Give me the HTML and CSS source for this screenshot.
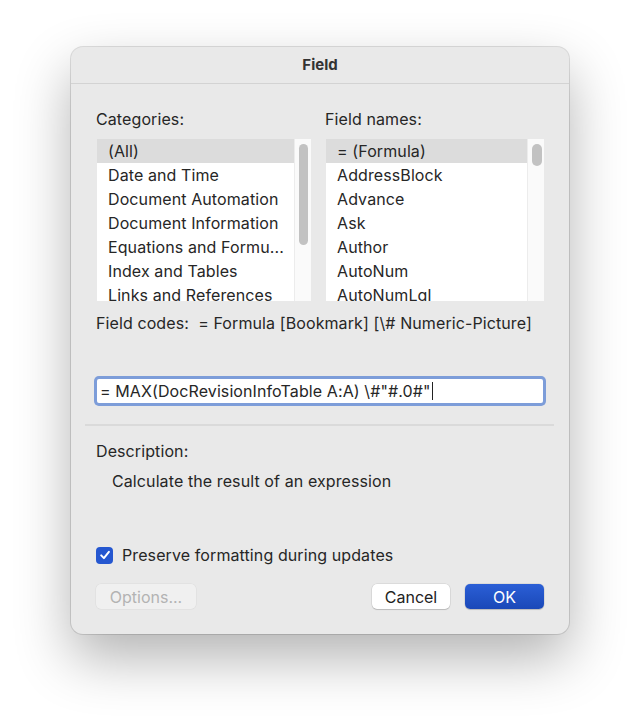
FILE: index.html
```html
<!DOCTYPE html>
<html lang="en">
<head>
    <meta charset="UTF-8">
    <meta name="viewport" content="width=device-width, initial-scale=1.0">
    <title>Field</title>
    <link rel="stylesheet" href="styles.css">
</head>
<body>
    <div class="dialog">
        <div class="titlebar">Field</div>
        <div class="content">
            <div class="columns">
                <div class="col">
                    <div class="label">Categories:</div>
                    <div class="list">
                        <ul class="items">
                            <li class="selected">(All)</li>
                            <li>Date and Time</li>
                            <li>Document Automation</li>
                            <li>Document Information</li>
                            <li>Equations and Formu...</li>
                            <li>Index and Tables</li>
                            <li>Links and References</li>
                        </ul>
                        <div class="track"><div class="thumb thumb-long"></div></div>
                    </div>
                </div>
                <div class="col col-right">
                    <div class="label">Field names:</div>
                    <div class="list">
                        <ul class="items">
                            <li class="selected">= (Formula)</li>
                            <li>AddressBlock</li>
                            <li>Advance</li>
                            <li>Ask</li>
                            <li>Author</li>
                            <li>AutoNum</li>
                            <li>AutoNumLgl</li>
                        </ul>
                        <div class="track"><div class="thumb thumb-short"></div></div>
                    </div>
                </div>
            </div>

            <div class="codes">Field codes:&nbsp; = Formula [Bookmark] [\# Numeric-Picture]</div>

            <div class="input">= MAX(DocRevisionInfoTable A:A) \#"#.0#"<span class="caret"></span></div>

            <div class="separator"></div>

            <div class="label">Description:</div>
            <div class="desc">Calculate the result of an expression</div>

            <label class="check">
                <span class="box">
                    <svg width="12" height="12" viewBox="0 0 12 12"><path d="M2.2 6.4 L4.9 9.1 L9.9 2.8" fill="none" stroke="#fff" stroke-width="2" stroke-linecap="round" stroke-linejoin="round"/></svg>
                </span>
                Preserve formatting during updates
            </label>

            <div class="buttons">
                <button class="btn disabled">Options...</button>
                <div class="spacer"></div>
                <button class="btn">Cancel</button>
                <button class="btn primary">OK</button>
            </div>
        </div>
    </div>
</body>
</html>
```

FILE: styles.css
```css
html, body {
    min-height: 728px;
}
body {
    margin: 0;
    padding-top: 47px;
    box-sizing: border-box;
    background: #fff;
    font-family: Inter, "Noto Sans", sans-serif;
    color: #262626;
    font-size: 16px;
}
.dialog {
    margin-left: 71px;
    width: 498px;
    height: 587px;
    box-sizing: border-box;
    background: #e9e9e9;
    border-radius: 12px;
    box-shadow: 0 0 0 1px rgba(0,0,0,0.12), 0 24px 55px rgba(0,0,0,0.3);
    display: flex;
    flex-direction: column;
}
.titlebar {
    height: 36px;
    line-height: 36px;
    text-align: center;
    font-weight: 700;
    font-size: 15px;
    color: #333;
    border-bottom: 1px solid #d3d3d3;
}
.content {
    padding: 25px 25px 0 25px;
    display: flex;
    flex-direction: column;
    letter-spacing: 0.1px;
}
.columns {
    display: flex;
    gap: 14px;
}
.col {
    width: 215px;
}
.col-right {
    width: 219px;
}
.label {
    line-height: 20px;
}
.col .label {
    margin-bottom: 10px;
}
.list {
    height: 162px;
    background: #fff;
    display: flex;
    overflow: hidden;
    margin-left: 1px;
}
.items {
    list-style: none;
    margin: 0;
    padding: 0;
    flex: 1;
}
.items li {
    height: 24px;
    line-height: 24px;
    padding-left: 11px;
    white-space: nowrap;
}
.items li.selected {
    background: #dcdcdc;
}
.track {
    width: 17px;
    background: #fafafa;
    border-left: 1px solid #ececec;
    padding: 5px 0 0 4px;
    box-sizing: border-box;
}
.thumb {
    width: 9px;
    background: #c2c2c2;
    border-radius: 5px;
}
.thumb-long {
    height: 101px;
}
.thumb-short {
    height: 22px;
    width: 10px;
}
.codes {
    margin-top: 12px;
    line-height: 20px;
}
.input {
    margin-top: 46px;
    margin-left: 1px;
    width: 446px;
    height: 24px;
    line-height: 24px;
    box-sizing: border-box;
    padding-left: 3px;
    background: #fff;
    box-shadow: 0 0 0 3px #7d9dd9;
    border-radius: 2px;
    white-space: nowrap;
    display: flex;
    align-items: center;
}
.caret {
    display: inline-block;
    width: 1px;
    height: 18px;
    background: #222;
    margin-left: 1px;
}
.separator {
    margin: 21px -10px 0 -11px;
    height: 2px;
    background: #dadada;
}
.separator + .label {
    margin-top: 15px;
}
.desc {
    margin-top: 10px;
    padding-left: 16px;
    line-height: 20px;
}
.check {
    margin-top: 54px;
    display: flex;
    align-items: center;
    gap: 9px;
    line-height: 20px;
}
.box {
    width: 17px;
    height: 17px;
    border-radius: 4px;
    background: #2557d0;
    display: flex;
    align-items: center;
    justify-content: center;
}
.buttons {
    margin-top: 19px;
    display: flex;
    gap: 15px;
}
.spacer {
    flex: 1;
}
.btn {
    height: 25px;
    padding: 0;
    border: none;
    border-radius: 5px;
    font-family: inherit;
    font-size: 16px;
    background: #fff;
    color: #222;
    box-shadow: 0 0 0 0.5px rgba(0,0,0,0.12), 0 1px 1px rgba(0,0,0,0.15);
    width: 78px;
}
.btn.disabled {
    width: 100px;
    background: #f0f0f0;
    color: #b3b3b3;
    box-shadow: 0 0 0 0.5px rgba(0,0,0,0.06);
}
.btn.primary {
    width: 79px;
    color: #fff;
    background: linear-gradient(#2b5fd6, #1a48b8);
}
```
